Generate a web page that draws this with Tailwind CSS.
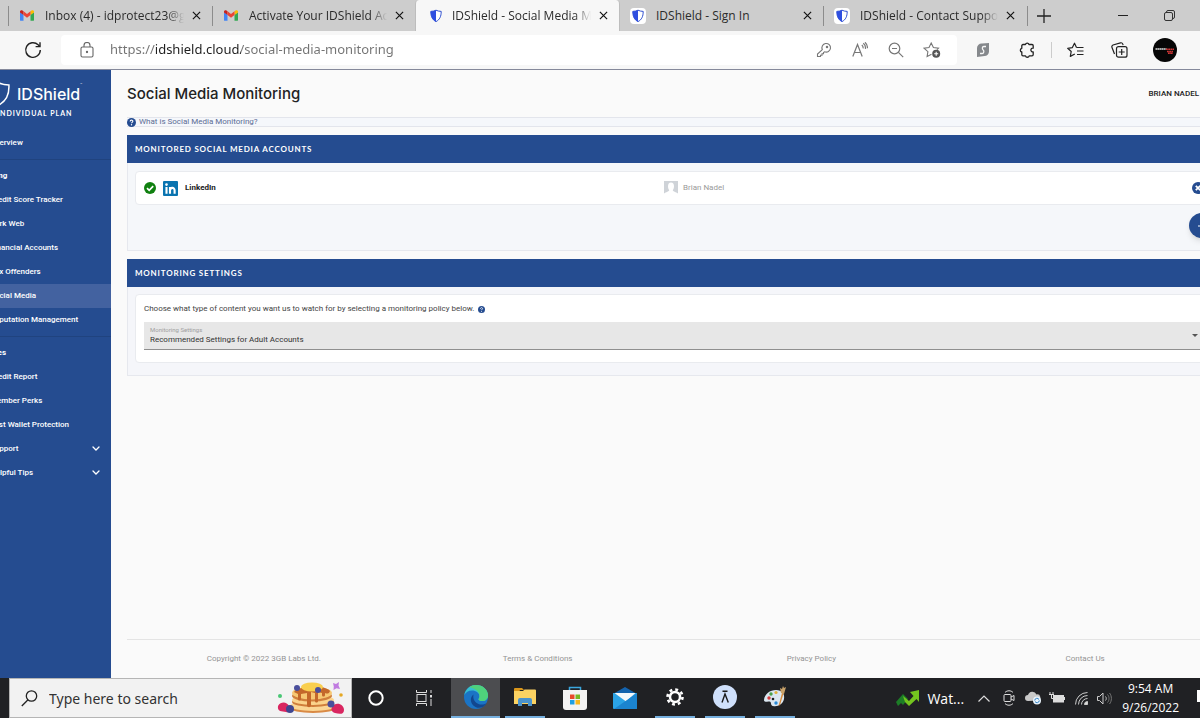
<!DOCTYPE html>
<html lang="en">
<head>
    <meta charset="UTF-8">
    <meta name="viewport" content="width=device-width, initial-scale=1.0">
    <title>IDShield - Social Media Monitoring</title>
    <script src="https://cdn.jsdelivr.net/npm/@tailwindcss/browser@4"></script>
</head>
<body class="h-screen flex flex-col overflow-hidden bg-[#fafafa] font-[Roboto,sans-serif] text-[#222]">

    <!-- Shared icons -->
    <svg class="hidden">
        <symbol id="gmail" viewBox="0 0 16 12">
            <path d="M0 2v9a1 1 0 0 0 1 1h3V5z" fill="#4285f4"/>
            <path d="M16 2v9a1 1 0 0 1-1 1h-3V5z" fill="#34a853"/>
            <path d="M12 1.2V5.5l4-3V1.6C16 .1 14.300-.5 13.200.3z" fill="#fbbc04"/>
            <path d="M0 1.600C0 .1 1.700-.5 2.800.3L4 1.200v4.300l-4-3z" fill="#c5221f"/>
            <path d="M4 1.200l4 3 4-3v4.300l-4 3-4-3z" fill="#ea4335"/>
        </symbol>
        <symbol id="shield" viewBox="0 0 16 16">
            <path d="M8 2.200c1.500.8 3.200 1.100 5.200 1.200 0 5-1.400 8.200-5.200 10.200-3.800-2-5.200-5.200-5.200-10.200 2-.1 3.700-.4 5.200-1.200z" fill="#fff" stroke="#2f4fd0" stroke-width="1"/>
            <path d="M8 2.200v11.400c-3.800-2-5.200-5.200-5.200-10.200 2-.1 3.700-.4 5.200-1.200z" fill="#2f4fe0"/>
        </symbol>
        <symbol id="close" viewBox="0 0 10 10">
            <path d="M1 1l8 8M9 1L1 9" stroke="#111" stroke-width="1.300" fill="none"/>
        </symbol>
        <symbol id="help" viewBox="0 0 10 10">
            <circle cx="5" cy="5" r="5" fill="#254c90"/>
            <path d="M3.500 3.900c0-2 3-2 3-.2 0 1.100-1.500 1.100-1.500 2.200" stroke="#fff" stroke-width="1.200" fill="none"/>
            <circle cx="5" cy="7.500" r=".75" fill="#fff"/>
        </symbol>
        <symbol id="chevron" viewBox="0 0 8 6">
            <path d="M1 1l3 3 3-3" stroke="#fff" stroke-width="1.300" fill="none" stroke-linecap="round"/>
        </symbol>
    </svg>

    <!-- Tab strip -->
    <header class="h-[31px] shrink-0 flex bg-[#cdcdcd] pl-2 font-['Open_Sans','Noto_Sans',sans-serif] text-xs text-[#2b2b2b]">
        <div class="w-[204px] flex items-center pl-3 pr-[11px] relative">
            <span class="absolute left-0 top-1.5 h-5 w-px bg-[#8c8c8c]"></span>
            <svg class="w-[14px] h-[11px] shrink-0"><use href="#gmail"/></svg>
            <button class="ml-[11px] flex-1 text-left whitespace-nowrap overflow-hidden [mask-image:linear-gradient(to_right,black_88%,transparent)]">Inbox (4) - idprotect23@gmail.com</button>
            <button aria-label="Close tab" class="ml-2"><svg class="size-[9px]"><use href="#close"/></svg></button>
        </div>
        <div class="w-[203px] flex items-center pl-3 pr-[11px] relative">
            <span class="absolute left-0 top-1.5 h-5 w-px bg-[#8c8c8c]"></span>
            <svg class="w-[14px] h-[11px] shrink-0"><use href="#gmail"/></svg>
            <button class="ml-[11px] flex-1 text-left whitespace-nowrap overflow-hidden [mask-image:linear-gradient(to_right,black_88%,transparent)]">Activate Your IDShield Account</button>
            <button aria-label="Close tab" class="ml-2"><svg class="size-[9px]"><use href="#close"/></svg></button>
        </div>
        <div class="w-[205px] flex items-center pl-3 pr-[11px] bg-[#f7f7f7] rounded-t border-x border-[#bdbdbd]">
            <svg class="size-4 shrink-0"><use href="#shield"/></svg>
            <button class="ml-2 flex-1 text-left whitespace-nowrap overflow-hidden [mask-image:linear-gradient(to_right,black_88%,transparent)]">IDShield - Social Media Monitoring</button>
            <button aria-label="Close tab" class="ml-2"><svg class="size-[9px]"><use href="#close"/></svg></button>
        </div>
        <div class="w-[203px] flex items-center pl-2.5 pr-[11px]">
            <span class="size-4 shrink-0 bg-white rounded-sm"><svg class="size-4"><use href="#shield"/></svg></span>
            <button class="ml-2.5 flex-1 text-left whitespace-nowrap overflow-hidden">IDShield - Sign In</button>
            <button aria-label="Close tab" class="ml-2"><svg class="size-[9px]"><use href="#close"/></svg></button>
        </div>
        <div class="w-[204px] flex items-center pl-[11px] pr-3 relative">
            <span class="absolute left-0 top-1.5 h-5 w-px bg-[#8c8c8c]"></span>
            <span class="size-4 shrink-0 bg-white rounded-sm"><svg class="size-4"><use href="#shield"/></svg></span>
            <button class="ml-2.5 flex-1 text-left whitespace-nowrap overflow-hidden [mask-image:linear-gradient(to_right,black_88%,transparent)]">IDShield - Contact Support Center</button>
            <button aria-label="Close tab" class="ml-2"><svg class="size-[9px]"><use href="#close"/></svg></button>
        </div>
        <div class="flex-1 flex items-center relative pl-2.5">
            <span class="absolute left-0 top-1.5 h-5 w-px bg-[#8c8c8c]"></span>
            <button aria-label="New tab"><svg class="size-[14px]" viewBox="0 0 14 14"><path d="M7 0v14M0 7h14" stroke="#222" stroke-width="1.300"/></svg></button>
            <button aria-label="Minimize" class="ml-auto"><svg class="size-[10px]" viewBox="0 0 10 10"><path d="M0 4.500h10" stroke="#222"/></svg></button>
            <button aria-label="Restore" class="ml-9 mr-[25px]"><svg class="size-[11px]" viewBox="0 0 11 11" fill="none" stroke="#333"><rect x=".5" y="2.500" width="8" height="8" rx="1.500"/><path d="M2.500 2.500V2A1.500 1.500 0 0 1 4 .5h5A1.500 1.500 0 0 1 10.500 2v5A1.500 1.500 0 0 1 9 8.500"/></svg></button>
        </div>
    </header>

    <!-- Address bar -->
    <div class="h-[39px] shrink-0 flex items-center bg-[#f7f7f7] border-b border-[#85899b]">
        <button aria-label="Refresh" class="ml-6">
            <svg class="size-[18px]" viewBox="0 0 18 18" fill="none" stroke="#222" stroke-width="1.400"><path d="M16.300 9a7.300 7.300 0 1 1-2.200-5.200l1.700 1.700"/><path d="M16 1.200v4.400h-4.400"/></svg>
        </button>
        <div class="ml-[19px] flex-1 h-[30px] flex items-center bg-white rounded pr-[7px]">
            <svg class="ml-[19px] w-[14px] h-4" viewBox="0 0 14 16" fill="none" stroke="#666" stroke-width="1.100"><rect x="1" y="5" width="12" height="10" rx="1.500"/><path d="M4 5V3.500a3 3 0 0 1 6 0V5"/><circle cx="7" cy="10" r=".6" fill="#666"/></svg>
            <input type="text" aria-label="Address" value="https://idshield.cloud/social-media-monitoring" class="ml-4 flex-1 outline-none font-['Noto_Sans',sans-serif] text-[13px] text-transparent bg-clip-text bg-[linear-gradient(to_right,#737373_46px,#1f1f1f_46px,#1f1f1f_131px,#737373_131px)]">
            <button aria-label="Passwords" class="w-9 flex justify-center"><svg class="size-4" viewBox="0 0 16 16" fill="none" stroke="#777" stroke-width="1.100"><path d="M6.300 7.600A4.300 4.300 0 1 1 8.600 9.800L7.500 10.500v1.300H6v1.500H4.500v1.200H1.500v-2.400z"/><circle cx="11" cy="4.900" r=".7"/></svg></button>
            <button aria-label="Read aloud" class="w-9 flex justify-center"><svg class="size-4" viewBox="0 0 16 16" fill="none" stroke="#777" stroke-width="1.200"><path d="M.8 14.500L5.500 2.500l4.700 12M2.400 10.500h6.200M9.800 3c1 .8 1.500 2 1.300 3.300M11.300 1.300C13 2.700 13.800 4.500 13.400 6.800M13 .3c1.700 1.500 2.600 3.500 2.400 6"/></svg></button>
            <button aria-label="Zoom" class="w-9 flex justify-center"><svg class="size-4" viewBox="0 0 16 16" fill="none" stroke="#777" stroke-width="1.200"><circle cx="6.500" cy="6.500" r="5.300"/><path d="M10.400 10.400l4.800 4.800M4 6.500h5"/></svg></button>
            <button aria-label="Add to favorites" class="w-9 flex justify-center"><svg class="w-[18px] h-4" viewBox="0 0 18 16" fill="none" stroke="#777" stroke-width="1.100"><path d="M8.500 12.200l-4.400 2.300.8-4.900L1 6.200l5-.7L8.200 1l2.200 4.500 5.100.7-1.500 1.500"/><circle cx="13.200" cy="11.800" r="4" fill="#555" stroke="none"/><path d="M13.200 9.800v4M11.200 11.800h4" stroke="#fff"/></svg></button>
        </div>
        <button aria-label="Surfshark" class="ml-1 w-11 flex justify-center"><svg class="w-3 h-[14px]" viewBox="0 0 12 14"><path d="M5 .5L12 0v8.500a4.500 4.500 0 0 1-4.500 4.500L0 14V5A4.500 4.500 0 0 1 5 .5z" fill="#85888c"/><path d="M9 3.500H6.800C5 3.500 5 6 6.200 7s.6 3.500-1 3.500H3" stroke="#f7f7f7" stroke-width="1.300" fill="none"/></svg></button>
        <button aria-label="Extensions" class="w-11 flex justify-center"><svg class="size-4" viewBox="0 0 16 16" fill="none" stroke="#222" stroke-width="1.300" stroke-linejoin="round"><path d="M4 2.500h2.400a1.900 1.900 0 0 1 3.600 0h3a1.200 1.200 0 0 1 1.200 1.200v2.500a1.900 1.900 0 1 0 0 3.700v2.700a1.200 1.200 0 0 1-1.200 1.200h-2.800a1.900 1.900 0 0 1-3.700 0H4a1.200 1.200 0 0 1-1.200-1.200V10a1.900 1.900 0 0 1 0-3.700V3.700A1.200 1.200 0 0 1 4 2.500z"/></svg></button>
        <span class="ml-0.5 mr-px w-px h-4 bg-[#ccc]"></span>
        <button aria-label="Favorites" class="w-11 flex justify-center"><svg class="w-[17px] h-4" viewBox="0 0 17 16" fill="none" stroke="#222" stroke-width="1.200" stroke-linejoin="round"><path d="M9.500 5.500L7.500 1.200 5.400 5.600l-4.700.7 3.500 3.200-.9 4.900 4.500-2.400M9.500 5.500h7M10 9h6.500M10 12.500h6.500"/></svg></button>
        <button aria-label="Collections" class="w-11 flex justify-center"><svg class="w-[17px] h-4" viewBox="0 0 17 16" fill="none" stroke="#222" stroke-width="1.200"><rect x="5.500" y="4.700" width="10.500" height="10.500" rx="2"/><path d="M10.700 7v6M7.700 10h6M3.500 12L1 5.500A2 2 0 0 1 2 3L9.500.8a2 2 0 0 1 2.300 1.300l.3 1"/></svg></button>
        <button aria-label="Profile" class="ml-0.5 mr-[13px] w-11 flex justify-center"><svg class="size-6" viewBox="0 0 24 24"><circle cx="12" cy="12" r="12" fill="#060606"/><path d="M2.500 11h11" stroke="#ddd" stroke-width="1.500" stroke-dasharray="1.800 .3"/><path d="M13 11.300h8M14 13.500h6M15 15.300h5" stroke="#d03535" stroke-width="1.400" stroke-dasharray="1.800 .4"/></svg></button>
    </div>

    <div class="flex-1 min-h-0 flex">

        <!-- Sidebar -->
        <nav class="-ml-12 w-[159px] shrink-0 bg-[#254c90] text-white text-[8px] font-medium">
            <div class="h-[61px] pt-3">
                <div class="flex items-center h-6">
                    <svg class="ml-9 w-[22px] h-6" viewBox="0 0 22 24" fill="none" stroke="#fff" stroke-width="1.500"><path d="M11 .9c3 1.600 6.200 2 9.900 2 .5 9.500-2.200 16-9.900 20C3.300 18.900.6 12.400 1.100 2.900c3.700 0 6.900-.4 9.900-2z"/></svg>
                    <span class="ml-[7px] text-base leading-6 font-medium font-[Inter,sans-serif]">IDShield</span>
                    <span class="self-start text-[3px]">™</span>
                </div>
                <p class="pl-[45px] mt-0.5 leading-[10px] font-[Lato,sans-serif] font-bold tracking-[1px] text-[7px]">INDIVIDUAL PLAN</p>
            </div>
            <a href="#" class="flex items-center h-6 pl-[38px]">Overview</a>
            <hr class="my-1 border-[#20437f]">
            <h2 class="flex items-center h-6 pl-4 font-bold">Monitoring</h2>
            <a href="#" class="flex items-center h-6 pl-[38px]">Credit Score Tracker</a>
            <a href="#" class="flex items-center h-6 pl-[38px]">Dark Web</a>
            <a href="#" class="flex items-center h-6 pl-[38px]">Financial Accounts</a>
            <a href="#" class="flex items-center h-6 pl-[38px]">Sex Offenders</a>
            <a href="#" class="flex items-center h-6 pl-[38px] bg-[#4362a0]">Social Media</a>
            <a href="#" class="flex items-center h-6 pl-[38px]">Reputation Management</a>
            <hr class="my-1 border-[#20437f]">
            <h2 class="flex items-center h-6 pl-4 font-bold">Resources</h2>
            <a href="#" class="flex items-center h-6 pl-[38px]">Credit Report</a>
            <a href="#" class="flex items-center h-6 pl-[38px]">Member Perks</a>
            <a href="#" class="flex items-center h-6 pl-[38px]">Lost Wallet Protection</a>
            <button class="w-full flex items-center justify-between h-6 pl-[38px] pr-[11px]">Support <svg class="w-2 h-1.5"><use href="#chevron"/></svg></button>
            <button class="w-full flex items-center justify-between h-6 pl-[38px] pr-[11px]">Helpful Tips <svg class="w-2 h-1.5"><use href="#chevron"/></svg></button>
        </nav>

        <!-- Content, runs past the right edge of the window -->
        <main class="flex-1 min-w-0 -mr-[38px] px-4 flex flex-col">
            <div class="h-12 flex items-center justify-between">
                <h1 class="text-[15px] font-medium font-[Inter,sans-serif]">Social Media Monitoring</h1>
                <span class="mr-[23px] text-[8px] font-medium">BRIAN NADEL</span>
            </div>
            <div class="-mt-px h-[10px] flex items-center border-y border-[#e3e5ec] bg-[#f5f7fb]">
                <svg class="size-[9px]"><use href="#help"/></svg>
                <a href="#" class="ml-[3px] text-[8px] leading-[8px] text-[#5b6c94]">What is Social Media Monitoring?</a>
            </div>

            <!-- Accounts -->
            <section class="mt-2 border border-[#e6e8ee] bg-[#f5f7fa]">
                <h2 class="-m-px h-7 flex items-center px-2 pb-px bg-[#254c90] text-white text-[8px] font-bold font-[Lato,sans-serif] tracking-widest">MONITORED SOCIAL MEDIA ACCOUNTS</h2>
                <div class="mt-[9px] mx-[7px] h-[34px] flex items-center pl-2 pr-[9px] bg-white border border-[#e9ebef] rounded-sm text-[8px]">
                    <div class="flex-1 flex items-center">
                        <svg class="size-3" viewBox="0 0 12 12"><circle cx="6" cy="6" r="6" fill="#108010"/><path d="M3 6.200l2.200 2.200L9.200 4.200" stroke="#fff" stroke-width="1.700" fill="none"/></svg>
                        <svg class="ml-[7px] size-[15px]" viewBox="0 0 15 15"><rect width="15" height="15" rx="1" fill="#0a74b0"/><circle cx="3.500" cy="3.600" r="1.300" fill="#fff"/><path d="M3.500 5.900v6.800M7 12.700V5.900M7 9.500c0-3.200 4.600-3.700 4.600-.2v3.400" stroke="#fff" stroke-width="2.100" fill="none"/></svg>
                        <span class="ml-[7px] font-bold">LinkedIn</span>
                    </div>
                    <div class="flex-1 flex items-center text-[#9a9a9a]">
                        <svg class="size-[14px]" viewBox="0 0 14 14"><rect width="14" height="14" fill="#cfd3d8"/><path d="M7 1.500c2 0 3 1.500 3 3.700 0 2-.7 3.300-1.200 4 .2 1.400 3.200 1.600 5.200 3.300V14H0v-1.500c2-1.700 5-1.900 5.200-3.300C4.700 8.500 4 7.200 4 5.200c0-2.200 1-3.700 3-3.700z" fill="#fff"/></svg>
                        <span class="ml-[5px]">Brian Nadel</span>
                    </div>
                    <button aria-label="Remove account" class="w-5 flex justify-end"><svg class="size-3" viewBox="0 0 12 12"><circle cx="6" cy="6" r="6" fill="#254c90"/><path d="M3.800 3.800l4.400 4.400M8.200 3.800L3.800 8.200" stroke="#fff" stroke-width="1.800"/></svg></button>
                </div>
                <div class="h-[45px] pt-2 px-[7px] flex justify-end">
                    <button aria-label="Add account" class="size-[25px] rounded-full bg-[#254c90] shadow-md flex items-center justify-center"><svg class="size-2" viewBox="0 0 8 8"><path d="M4 0v8M0 4h8" stroke="#fff"/></svg></button>
                </div>
            </section>

            <!-- Settings -->
            <section class="mt-2 border border-[#e6e8ee] bg-[#f5f6fa] pb-3">
                <h2 class="-m-px h-7 flex items-center px-2 pb-px bg-[#254c90] text-white text-[8px] font-bold font-[Lato,sans-serif] tracking-widest">MONITORING SETTINGS</h2>
                <div class="mt-2 mx-[7px] px-2 pt-2 pb-3 bg-white border border-[#e9ebef] rounded-sm">
                    <p class="h-3 flex items-center text-[8px] text-[#444]">Choose what type of content you want us to watch for by selecting a monitoring policy below. <svg class="ml-1 size-[7px]"><use href="#help"/></svg></p>
                    <div class="mt-[7px] h-7 flex items-center bg-[#e7e7e7] border-b border-[#8f8f8f] px-1.5">
                        <div class="flex-1">
                            <label for="policy" class="block text-[6px] leading-[8px] text-[#a0a0a0]">Monitoring Settings</label>
                            <select id="policy" class="block w-full appearance-none outline-none text-[8px] leading-[12px] text-[#333]">
                                <option>Recommended Settings for Adult Accounts</option>
                            </select>
                        </div>
                        <svg class="mr-px w-1.5 h-[3px]" viewBox="0 0 6 3"><path d="M0 0h6L3 3z" fill="#555"/></svg>
                    </div>
                </div>
            </section>

            <footer class="mt-auto h-[39px] border-t border-[#e4e4e4] grid grid-cols-4 items-center text-center text-[8px] text-[#949494]">
                <span>Copyright © 2022 3GB Labs Ltd.</span>
                <a href="#">Terms &amp; Conditions</a>
                <a href="#">Privacy Policy</a>
                <a href="#">Contact Us</a>
            </footer>
        </main>
    </div>

    <!-- Taskbar -->
    <div class="h-10 shrink-0 flex bg-[#202124] text-white pl-[9px] font-['Open_Sans','Noto_Sans',sans-serif]">
        <label class="w-[343px] flex items-center bg-[#f2f2f2] border border-[#b5b5b5] pl-[11px] pr-1.5">
            <svg class="size-[17px] shrink-0" viewBox="0 0 17 17" fill="none" stroke="#222" stroke-width="1.300"><circle cx="10.500" cy="6" r="5.200"/><path d="M7 9.800L.8 16"/></svg>
            <input type="text" aria-label="Search" placeholder="Type here to search" class="ml-[11px] pt-0.5 flex-1 min-w-0 outline-none font-['Noto_Sans',sans-serif] text-sm placeholder:text-[#333]">
            <svg class="w-[68px] h-[36px] shrink-0" viewBox="0 0 68 36">
                <ellipse cx="36" cy="28" rx="23" ry="5" fill="#d98a45"/><ellipse cx="36" cy="26" rx="23" ry="5" fill="#fbd795"/>
                <ellipse cx="36" cy="22" rx="21" ry="5" fill="#d07f3c"/><ellipse cx="36" cy="20" rx="21" ry="5" fill="#fbd48c"/>
                <ellipse cx="35" cy="16" rx="20" ry="5.500" fill="#d07f3c"/><ellipse cx="35" cy="13" rx="20" ry="6.500" fill="#f7c873"/>
                <path d="M17 12c4-6 30-8 36-1-1 3-3 3-5 2v2c0 2-3 2-3 0v-2l-4-1v9c0 2-3 2-3 0v-8l-4-1v13c0 3-4 3-4 0V13l-6 1v5c0 2-3 2-3 0v-5z" fill="#c4682a"/>
                <ellipse cx="35" cy="7" rx="11" ry="4.500" fill="#f9cf4f"/>
                <circle cx="20" cy="8" r="3" fill="#4a4f9c"/><circle cx="41" cy="10" r="3" fill="#4a4f9c"/>
                <path d="M1 26c3-5 9-4 11 0s1 7-3 6-9 0-8-6z" fill="#d92660"/><circle cx="13" cy="29" r="4" fill="#3f4690"/>
                <path d="M57 25c4-3 10 0 10 5s-5 4-9 3-5-5-1-8z" fill="#d92660"/><circle cx="54" cy="24" r="3.500" fill="#4a4f9c"/>
                <circle cx="3" cy="16" r="2" fill="#48c774"/><circle cx="64" cy="15" r="1.800" fill="#e5a823"/>
                <path d="M56 3l3 1 3-2-.5 3.500L63 9l-3.500-.7L56.500 10l.3-3.500z" fill="#c07be0"/>
            </svg>
        </label>
        <button aria-label="Cortana" class="w-12 flex items-center justify-center"><svg class="size-4" viewBox="0 0 16 16"><circle cx="8" cy="8" r="6.700" stroke="#fff" stroke-width="2" fill="none"/></svg></button>
        <button aria-label="Task View" class="mr-[3px] w-12 flex items-center justify-center"><svg class="w-[18px] h-4" viewBox="0 0 18 16" fill="none" stroke="#ddd"><rect x="2" y="4.500" width="9" height="7"/><path d="M1.500 0v2.500h10V0M1.500 16v-2.500h10V16M16 0v3M16 9v7"/><path d="M16 5v2.500" stroke-width="2"/></svg></button>
        <button aria-label="Edge" class="w-[49px] flex items-center justify-center bg-[#4c4d50] border-b-2 border-[#76b0df]">
            <svg class="size-6" viewBox="0 0 24 24">
                <circle cx="12" cy="12" r="12" fill="#1b74c5"/>
                <path d="M.3 10C1.500 4 6.200 0 12 0c7 0 12 5 12 10.500 0 3.500-2.500 5.500-5.500 5.500-2.500 0-4-.8-4-1.800 0-.7 1-1.200 1-3C15.500 8 12 5.500 8 5.500c-3.500 0-6.300 1.800-7.700 4.500z" fill="#37bfd0"/>
                <path d="M12 0c7 0 12 5 12 10.500 0 3.500-2.500 5.500-5.500 5.500-2.500 0-4-.8-4-1.800 0-.7 1-1.200 1-3C15.500 6 10 3 5 2.300A12 12 0 0 1 12 0z" fill="#4fd27c"/>
                <path d="M9.500 9.500c-4 3-3.500 9.500 2 12.500 4 2 8.500.5 11-3.800-2 1.300-4.800 1.800-7.500 1-4-1.200-6.500-5.200-5.500-9.700z" fill="#12478f"/>
            </svg>
        </button>
        <button aria-label="File Explorer" class="mx-[5px] w-10 flex items-center justify-center border-b-2 border-[#76b0df]">
            <svg class="w-[22px] h-[18px]" viewBox="0 0 22 18"><path d="M0 1a1 1 0 0 1 1-1h7l2 2h-4l-1 2H0z" fill="#d9961b"/><path d="M0 3h9l1.500-1.500H21a1 1 0 0 1 1 1V16H0z" fill="#fbd262"/><path d="M4 18v-6a2 2 0 0 1 2-2h10a2 2 0 0 1 2 2v6h-4v-3H8v3z" fill="#4b93cc"/></svg>
        </button>
        <button aria-label="Store" class="w-[50px] flex items-center justify-center">
            <svg class="size-6" viewBox="0 0 24 24"><path d="M6.500 5V1.500h11V5" stroke="#3ba7dd" stroke-width="1.500" fill="none"/><path d="M0 4h24v17a3 3 0 0 1-3 3H3a3 3 0 0 1-3-3z" fill="#f3f3f3"/><path d="M7 8.500h4.500V13H7z" fill="#e8492a"/><path d="M12.500 8.500H17V13h-4.500z" fill="#78b722"/><path d="M7 14h4.500v4.500H7z" fill="#1f9fe3"/><path d="M12.500 14H17v4.500h-4.500z" fill="#f8b71c"/></svg>
        </button>
        <button aria-label="Mail" class="w-[50px] flex items-center justify-center">
            <svg class="w-6 h-[22px]" viewBox="0 0 24 22"><path d="M0 7l12-7 12 7z" fill="#1463ad"/><path d="M0 6h24v15a1 1 0 0 1-1 1H1a1 1 0 0 1-1-1z" fill="#2ba3e6"/><path d="M1.500 6h21L13 14.500z" fill="#f5f8fa"/><path d="M24 6v15a1 1 0 0 1-1 1H1l13-9z" fill="#1b84d0"/></svg>
        </button>
        <button aria-label="Settings" class="mx-[5px] w-10 flex items-center justify-center border-b-2 border-[#76b0df]">
            <svg class="size-[18px]" viewBox="0 0 18 18" fill="none" stroke="#fff"><circle cx="9" cy="9" r="5" stroke-width="2.500"/><circle cx="9" cy="9" r="7.500" stroke-width="2.600" stroke-dasharray="2.900 2.990"/></svg>
        </button>
        <button aria-label="Translator" class="mx-[5px] w-10 flex items-center justify-center border-b-2 border-[#76b0df]">
            <svg class="size-6" viewBox="0 0 24 24"><circle cx="12" cy="12" r="12" fill="#cfe0fb"/><path d="M9 17.500l3-8.500 3.300 8.500M9.500 6.200h5" stroke="#1a1a1a" stroke-width="1.400" fill="none"/></svg>
        </button>
        <button aria-label="Paint" class="mx-[5px] w-10 flex items-center justify-center border-b-2 border-[#76b0df]">
            <svg class="size-[22px]" viewBox="0 0 22 22"><path d="M12 4c6 0 9 4 8 9s-6 8-11 7c-3-.6-1-4-3.500-4.500S0 17 0 14C.5 8 6 4 12 4z" fill="#dbe7f1"/><circle cx="5" cy="12" r="1.700" fill="#d63d3d"/><circle cx="7" cy="8" r="1.700" fill="#4aa04a"/><circle cx="12" cy="6.500" r="1.600" fill="#e0b23c"/><circle cx="9" cy="13" r="1.300" fill="#202124"/><circle cx="12" cy="17" r="1.700" fill="#2a8ad6"/><path d="M18 7l1.500.5L16 19l-1.500 1z" fill="#d98c3a"/><path d="M17 7l-1-5 2 1 1-3 1 2 2-1-2 7z" fill="#c8a26a"/></svg>
        </button>
        <div class="flex-1 flex items-center justify-end">
            <svg class="w-[23px] h-4" viewBox="0 0 23 16"><path d="M0 12l7-8 5 5-5 6-2-2-3 3z" fill="#1c7d26"/><path d="M7 6l6 5 4.500-5L14 2l9-2v12l-2.500-3L13 16l-4-4z" fill="#74c51f"/></svg>
            <span class="ml-2 pt-0.5 text-sm">Wat...</span>
            <svg class="ml-[14px] w-3 h-[7px]" viewBox="0 0 12 7" fill="none" stroke="#ddd" stroke-width="1.200"><path d="M.5 6.500L6 1l5.500 5.500"/></svg>
            <svg class="ml-[13px] w-3 h-4" viewBox="0 0 12 16" fill="none" stroke="#ddd"><rect x="1" y="4.500" width="7" height="7" rx="1"/><path d="M8 7l3-1.500v5L8 9M2 2.500c2-2.300 6-2.300 8 0M2 13.500c2 2.300 6 2.300 8 0"/></svg>
            <svg class="ml-2.5 w-[17px] h-[14px]" viewBox="0 0 17 14"><path d="M3 10a3 3 0 0 1 0-6 4.500 4.500 0 0 1 8.500-.5A3 3 0 0 1 13 9.500z" fill="#c9c9c9"/><circle cx="12" cy="9.500" r="4" fill="#e9f3fb"/><path d="M9.700 9.500a2.300 2.300 0 0 1 4.300-1M14.300 9.500a2.300 2.300 0 0 1-4.300 1" stroke="#2d7fc4" fill="none"/></svg>
            <svg class="ml-[7px] w-4 h-3" viewBox="0 0 16 12" fill="none" stroke="#ddd"><rect x="4.500" y="3.500" width="10" height="6.500" fill="#ddd"/><path d="M15.500 5v3M1 0v2M4 0v2M0 2.500h5M2.500 3v3.500h2" /></svg>
            <svg class="ml-2.5 size-[13px]" viewBox="0 0 13 13" fill="none" stroke="#ccc"><path d="M.5 12.500a12 12 0 0 1 12-12M3.500 12.500a9 9 0 0 1 9-9M6.500 12.500a6 6 0 0 1 6-6"/><path d="M9.500 12.500a3 3 0 0 1 3-3v3z" fill="#ddd"/></svg>
            <svg class="ml-[9px] w-[15px] h-[13px]" viewBox="0 0 15 13" fill="none" stroke="#ccc"><path d="M.5 4.500h2L6 1v11L2.500 8.500h-2zM8.500 4.500c1 1 1 3 0 4"/><path d="M10.500 2.500c2 2 2 6 0 8M12.500 1c2.500 3 2.500 8 0 11" stroke="#777"/></svg>
            <div class="ml-[10px] text-center text-xs leading-[19px]">
                <div>9:54 AM</div>
                <div>9/26/2022</div>
            </div>
            <span class="ml-[18px] w-[3px] h-3 bg-white -mt-1"></span>
        </div>
    </div>

</body>
</html>
